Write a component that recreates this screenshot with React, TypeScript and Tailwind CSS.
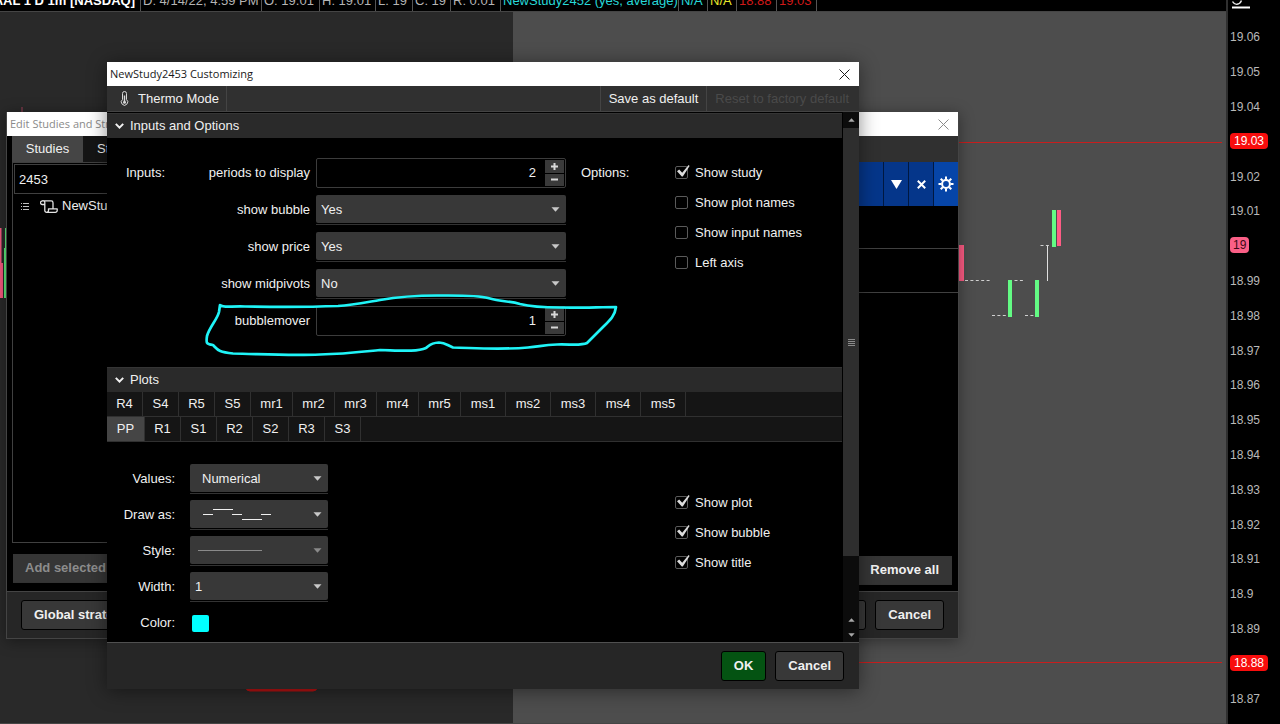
import { useState, type ReactNode } from "react";
import clsx from "clsx";

const quotes = [
    { text: "D: 4/14/22, 4:59 PM", width: "w-[121px]", color: "text-[#b4b4b4]" },
    { text: "O: 19.01", width: "w-[58px]", color: "text-[#b4b4b4]" },
    { text: "H: 19.01", width: "w-[56px]", color: "text-[#b4b4b4]" },
    { text: "L: 19", width: "w-[37px]", color: "text-[#b4b4b4]" },
    { text: "C: 19", width: "w-[38px]", color: "text-[#b4b4b4]" },
    { text: "R: 0.01", width: "w-[50px]", color: "text-[#b4b4b4]" },
    { text: "NewStudy2452 (yes, average)", width: "w-[178px]", color: "text-[#27d8d8]" },
    { text: "N/A", width: "w-[29px]", color: "text-[#27d8d8]" },
    { text: "N/A", width: "w-[29px]", color: "text-[#e8e82a]" },
    { text: "18.88", width: "w-[40px]", color: "text-[#d01818]" },
    { text: "19.03", width: "w-[40px]", color: "text-[#d01818]" },
];

const prices = [
    "19.06", "19.05", "19.04", "19.03", "19.02", "19.01", "19", "18.99", "18.98", "18.97",
    "18.96", "18.95", "18.94", "18.93", "18.92", "18.91", "18.9", "18.89", "18.88", "18.87",
];

const plotRows = [
    ["R4", "S4", "R5", "S5", "mr1", "mr2", "mr3", "mr4", "mr5", "ms1", "ms2", "ms3", "ms4", "ms5"],
    ["PP", "R1", "S1", "R2", "S2", "R3", "S3"],
];

function tabWidth(name: string) {
    if (name.startsWith("ms")) return "w-[45px]";
    if (name.startsWith("mr")) return "w-[42px]";
    return name === "PP" ? "w-[38px]" : "w-9";
}

function CloseIcon({ className }: { className?: string }) {
    return (
        <svg className={clsx("size-[11px]", className)} viewBox="0 0 11 11" fill="none" stroke="currentColor">
            <path d="M0.5 0.5l10 10M10.5 0.5l-10 10" />
        </svg>
    );
}

function Caret({ className }: { className?: string }) {
    return (
        <svg className={className} viewBox="0 0 8 5" fill="currentColor">
            <path d="M0 0.3h8L4 4.8z" />
        </svg>
    );
}

function TitleBar({ title, inactive }: { title: string; inactive?: boolean }) {
    return (
        <div className={clsx("flex h-6 items-center justify-between bg-white pl-[3px] pr-[9px]", inactive ? "text-[#8a8a8a]" : "text-[#1a1a1a]")}>
            <h2 className="font-['Open_Sans',sans-serif] text-[11px] leading-6 whitespace-nowrap">{title}</h2>
            <button aria-label={`Close ${title}`}><CloseIcon /></button>
        </div>
    );
}

function DialogButton({ children, primary }: { children: ReactNode; primary?: boolean }) {
    return (
        <button
            className={clsx(
                "h-[30px] rounded-[3px] border border-black px-3 font-bold text-[#f0f0f0] whitespace-nowrap",
                primary ? "bg-[#045312]" : "bg-[#383838]"
            )}
        >
            {children}
        </button>
    );
}

function SectionHeader({ children }: { children: ReactNode }) {
    return (
        <button className="flex h-[25px] w-full items-center gap-[6px] border-t border-[#353535] bg-[#2a2a2a] pl-2">
            <svg className="h-[6px] w-[9px]" viewBox="0 0 9 6" fill="none" stroke="#f2f2f2" strokeWidth="2">
                <path d="M0.8 0.9L4.5 4.6L8.2 0.9" />
            </svg>
            {children}
        </button>
    );
}

function Dropdown({ id, value, options, picture, dim }: {
    id: string;
    value?: string;
    options?: string[];
    picture?: ReactNode;
    dim?: boolean;
}) {
    return (
        <div className="relative h-[30px] w-full border-b border-[#333] pb-px">
            <select
                id={id}
                defaultValue={value}
                className={clsx("block h-7 w-full appearance-none rounded-[2px] bg-[#383838] pt-[2px] pr-6 text-[#f0f0f0] outline-none", value === "Numerical" ? "pl-3" : "pl-[5px]")}
            >
                {(options ?? []).map((o) => <option key={o}>{o}</option>)}
            </select>
            {picture}
            <Caret className={clsx("pointer-events-none absolute top-3 right-[6px] h-[5px] w-[9px]", dim ? "text-[#8a8a8a]" : "text-[#c8c8c8]")} />
        </div>
    );
}

function Spinner({ id, initial }: { id: string; initial: number }) {
    const [value, setValue] = useState(initial);
    return (
        <div className="flex h-[30px] w-full rounded-[2px] border border-[#3c3c3c] p-px">
            <input
                id={id}
                inputMode="numeric"
                value={value}
                onChange={(e) => setValue(Number(e.target.value) || 0)}
                className="min-w-0 flex-1 bg-transparent pr-[9px] text-right outline-none"
            />
            <div className="flex w-[19px] flex-col gap-px">
                <button aria-label={`Increase ${id}`} onClick={() => setValue(value + 1)} className="flex flex-1 items-center justify-center bg-[#3a3a3a]">
                    <svg className="size-[7px]" viewBox="0 0 7 7" stroke="#d8d8d8" strokeWidth="2"><path d="M3.5 0v7M0 3.5h7" /></svg>
                </button>
                <button aria-label={`Decrease ${id}`} onClick={() => setValue(value - 1)} className="flex flex-1 items-center justify-center bg-[#3a3a3a]">
                    <svg className="size-[7px]" viewBox="0 0 7 7" stroke="#d8d8d8" strokeWidth="2"><path d="M0 3.5h7" /></svg>
                </button>
            </div>
        </div>
    );
}

function CheckOption({ children, checked }: { children: ReactNode; checked?: boolean }) {
    return (
        <label className="flex h-[30px] items-center gap-[7px] whitespace-nowrap">
            <span className="relative mb-px flex">
                <input type="checkbox" defaultChecked={checked} className="peer size-[13px] appearance-none rounded-[2px] border border-[#5a5a5a]" />
                <svg className="pointer-events-none absolute bottom-[2px] left-[2px] hidden h-3 w-[13px] peer-checked:block" viewBox="0 0 13 12" fill="#dcdcdc">
                    <path d="M0 6.2L2.2 4.6L5.2 7.8L11.6 0L12.6 0.9L5.8 11.6H4.8z" />
                </svg>
            </span>
            {children}
        </label>
    );
}

function Chart() {
    return (
        <div className="relative flex flex-1 overflow-hidden border-t border-b border-[#454545]">
            <div className="w-[513px] bg-[#292929]" />
            <div className="flex-1 bg-[#4d4d4d]" />
            <svg className="absolute top-0 left-0 h-[712px] w-[1222px]" viewBox="0 12 1222 712">
                <path d="M22 107v8" stroke="#a04058" />
                <path d="M0 228h1.500v35h1.500v35h-3z" fill="#f5587e" />
                <path d="M5 228h1v20h1v50h-3v-50h1z" fill="#5df07c" />
                <path d="M850 142.500h372M850 662.500h372" stroke="#c81e1e" />
                <g fill="#ff5c85">
                    <path d="M959 245h5v36h-5zM1057 210h4v36h-4z" />
                </g>
                <path d="M1008 280h4v37h-4zM1035 280h4v37h-4zM1052 210h4v37h-4z" fill="#63fb84" />
                <g stroke="#d0d0d0" strokeDasharray="3 2.4">
                    <path d="M965 280.500h26M1014.500 280.500h9M992 315.500h15M1025 315.500h9M1040.500 245.500h9" />
                </g>
                <path d="M1047.500 246v35" stroke="#e0e0e0" />
                <rect x="246" y="674" width="71" height="17" rx="4" fill="#b81212" stroke="#b81212" />
            </svg>
        </div>
    );
}

function PriceAxis() {
    return (
        <div className="flex w-[54px] flex-col border-l-2 border-[#303030] bg-black pb-2 text-[12px] text-[#b9b9b9]">
            <svg className="ml-1 h-5 w-[18px]" viewBox="0 0 18 20" fill="none">
                <path d="M0.500 1.500C2 4 3.500 4.500 5 4.300S8.500 3 9.500 0.500" stroke="#e8e8e8" strokeWidth="1.400" />
                <path d="M0 7.500h18" stroke="#fff" strokeWidth="2" />
            </svg>
            {prices.map((p) => (
                <div key={p} className="flex flex-1 items-center pl-[2px]">
                    <span
                        className={clsx(
                            "rounded-[4px]",
                            p === "19.03" || p === "18.88"
                                ? "mb-[2px] bg-[#f80d0d] px-1 leading-4 text-white"
                                : p === "19" ? "mb-[2px] bg-[#fb5f86] px-[3px] leading-4 text-[#3d0815]" : "leading-4"
                        )}
                    >
                        {p}
                    </span>
                </div>
            ))}
        </div>
    );
}

function EditStudiesWindow() {
    return (
        <section className="absolute top-[112px] left-[6px] w-[953px] overflow-hidden border border-[#444] border-t-0 bg-black shadow-[0_2px_14px_rgba(0,0,0,0.4)]">
            <TitleBar title="Edit Studies and Strategies" inactive />
            <div className="flex justify-between">
                <div className="flex w-[140px] flex-col pl-[5px]">
                    <div className="flex h-[26px]">
                        <button className="w-[71px] shrink-0 bg-[#454545]">Studies</button>
                        <button className="flex-1 bg-[#151515] pl-3.5 text-left">Strategies</button>
                    </div>
                    <div className="flex h-[381px] flex-col border border-[#404040] border-r-0 pt-px pl-px">
                        <input aria-label="Search studies" defaultValue="2453" className="h-[30px] w-full border border-[#404040] pl-1 outline-none" />
                        <div className="flex h-6 items-center pl-[7px] whitespace-nowrap">
                            <svg className="mr-[11px] h-[7px] w-2 shrink-0" viewBox="0 0 8 7" stroke="#c0c0c0">
                                <path d="M0 0.500h1M2 0.500h6M0 3.500h1M2 3.500h6M0 6.500h1M2 6.500h6" />
                            </svg>
                            <svg className="mr-1 h-[13px] w-[18px] shrink-0" viewBox="0 0 18 13" fill="none" stroke="#e4e4e4" strokeWidth="1.300" strokeLinejoin="round">
                                <path d="M3.500 4.500H2.300A1.800 1.800 0 1 1 2.300 0.900H11.200A1.800 1.800 0 0 1 13 2.700V8.800M4.800 2.700V10.500A1.800 1.800 0 0 0 6.600 12.300H15.300A1.800 1.800 0 0 0 17.200 10.500V8.800H8.500V10.500A1.800 1.800 0 0 1 6.600 12.300M2.300 0.900A1.800 1.800 0 0 1 4.800 2.700V4.500H2.500" />
                            </svg>
                            NewStudy2453
                        </div>
                    </div>
                    <button disabled className="mt-[11px] mb-2 ml-px h-[29px] border-b border-[#333] bg-[#353535] pl-3 text-left font-bold whitespace-nowrap text-[#8c8c8c]">Add selected</button>
                </div>
                <div className="flex w-[140px] flex-col">
                    <div className="h-[26px] bg-[#303030]" />
                    <div className="flex h-[44px] gap-px bg-[#001840]">
                        <div className="flex-1 bg-[#05368a]" />
                        <button aria-label="Move down" className="flex w-6 items-center justify-center bg-[#05368a]">
                            <svg className="h-[9px] w-[11px]" viewBox="0 0 11 9" fill="#fff"><path d="M0 0h11L5.500 9z" /></svg>
                        </button>
                        <button aria-label="Remove study" className="flex w-6 items-center justify-center bg-[#05368a]">
                            <svg className="size-[9px]" viewBox="0 0 9 9" stroke="#fff" strokeWidth="2"><path d="M0.800 0.800l7.400 7.400M8.200 0.800L0.800 8.200" /></svg>
                        </button>
                        <button aria-label="Study settings" className="flex w-6 items-center justify-center bg-[#0645a8]">
                            <svg className="size-4" viewBox="0 0 16 16" fill="none" stroke="#fff" strokeWidth="2">
                                <circle cx="8" cy="8" r="3.900" />
                                <path d="M8 0.500v3M8 12.500v3M0.500 8h3M12.500 8h3M2.700 2.700l2.100 2.100M11.200 11.200l2.100 2.100M13.300 2.700l-2.100 2.100M4.800 11.200l-2.100 2.100" />
                            </svg>
                        </button>
                    </div>
                    <div className="h-[43px] border-b border-[#404040]" />
                    <div className="h-11 border-b border-[#404040]" />
                    <button className="mt-auto mr-1.5 mb-1.5 ml-9 h-[29px] border-b border-[#333] bg-[#353535] pr-[13px] text-right font-bold text-[#f0f0f0]">Remove all</button>
                </div>
            </div>
            <div className="flex h-[47px] items-center justify-between border-t border-[#444] bg-[#262626] px-3.5">
                <DialogButton>Global strategy behavior</DialogButton>
                <div className="flex gap-[9px]">
                    <DialogButton>Apply</DialogButton>
                    <DialogButton>Cancel</DialogButton>
                </div>
            </div>
        </section>
    );
}

function InputsAndOptions() {
    return (
        <div className="flex pt-5 pb-[31px] pl-[19px]">
            <div className="w-[60px] leading-[30px]">Inputs:</div>
            <div className="grid w-[380px] grid-cols-[1fr_250px] items-center gap-x-1.5 gap-y-[7px] text-right">
                <label htmlFor="periods">periods to display</label>
                <Spinner id="periods" initial={2} />
                <label htmlFor="show-bubble">show bubble</label>
                <Dropdown id="show-bubble" value="Yes" options={["Yes", "No"]} />
                <label htmlFor="show-price">show price</label>
                <Dropdown id="show-price" value="Yes" options={["Yes", "No"]} />
                <label htmlFor="show-midpivots">show midpivots</label>
                <Dropdown id="show-midpivots" value="No" options={["Yes", "No"]} />
                <label htmlFor="bubblemover">bubblemover</label>
                <Spinner id="bubblemover" initial={1} />
            </div>
            <div className="ml-[15px] w-[94px] leading-[30px]">Options:</div>
            <div>
                <CheckOption checked>Show study</CheckOption>
                <CheckOption>Show plot names</CheckOption>
                <CheckOption>Show input names</CheckOption>
                <CheckOption>Left axis</CheckOption>
            </div>
        </div>
    );
}

function Plots() {
    return (
        <>
            {plotRows.map((row) => (
                <div key={row[0]} role="tablist" className="flex h-[25px] border-b border-[#303030] bg-[#151515]">
                    {row.map((name) => (
                        <button key={name} role="tab" aria-selected={name === "PP"} className={clsx("border-r border-[#303030]", tabWidth(name), name === "PP" && "bg-[#454545]")}>
                            {name}
                        </button>
                    ))}
                </div>
            ))}
            <div className="flex pt-[22px] pb-1">
                <div className="grid w-[221px] grid-cols-[68px_138px] items-center gap-x-[15px] gap-y-1.5 text-right">
                    <label htmlFor="values">Values:</label>
                    <Dropdown id="values" value="Numerical" options={["Numerical"]} />
                    <label htmlFor="draw-as">Draw as:</label>
                    <Dropdown
                        id="draw-as"
                        picture={
                            <svg className="pointer-events-none absolute top-2 left-[13px] h-3 w-[69px]" viewBox="0 0 69 12" stroke="#f0f0f0" fill="none">
                                <path d="M0 6.500h10M10 1.500h20M29 6.500h10M39 11.500h20M58 6.500h10" />
                            </svg>
                        }
                    />
                    <label htmlFor="style">Style:</label>
                    <Dropdown
                        id="style"
                        dim
                        picture={
                            <svg className="pointer-events-none absolute top-[14px] left-2 h-px w-16" viewBox="0 0 64 1" stroke="#8a8a8a">
                                <path d="M0 0.500h64" />
                            </svg>
                        }
                    />
                    <label htmlFor="width">Width:</label>
                    <Dropdown id="width" value="1" options={["1", "2", "3", "4", "5"]} />
                    <label htmlFor="color">Color:</label>
                    <div className="flex h-[30px] items-center pl-[2px]">
                        <input
                            id="color"
                            type="color"
                            defaultValue="#00ffff"
                            className="size-[17px] appearance-none overflow-hidden rounded-[2px] [&::-webkit-color-swatch]:border-0 [&::-webkit-color-swatch-wrapper]:p-0"
                        />
                    </div>
                </div>
                <div className="ml-[347px] pt-6">
                    <CheckOption checked>Show plot</CheckOption>
                    <CheckOption checked>Show bubble</CheckOption>
                    <CheckOption checked>Show title</CheckOption>
                </div>
            </div>
        </>
    );
}

function ScrollBar() {
    return (
        <div className="ml-px flex w-4 flex-col items-center bg-[#0c0c0c] text-[#a8a8a8]">
            <div className="flex h-4 items-center"><Caret className="h-1 w-[7px] rotate-180" /></div>
            <div className="flex w-full flex-1 items-center justify-center bg-[#2e2e2e]">
                <svg className="h-[7px] w-[7px]" viewBox="0 0 7 7" stroke="#8a8a8a"><path d="M0 0.500h7M0 2.500h7M0 4.500h7M0 6.500h7" /></svg>
            </div>
            <div className="flex h-[86px] flex-col justify-end gap-[11px] pb-[5px]">
                <Caret className="h-1 w-[7px] rotate-180" />
                <Caret className="h-1 w-[7px]" />
            </div>
        </div>
    );
}

function CustomizingDialog() {
    return (
        <section className="absolute top-[62px] left-[107px] w-[752px] bg-black shadow-[0_2px_18px_rgba(0,0,0,0.45)]">
            <TitleBar title="NewStudy2453 Customizing" />
            <div className="flex h-[26px] border-b border-[#444] bg-[#303030]">
                <button className="flex items-center gap-2 border-r border-[#444] pr-[7px] pl-3">
                    <svg className="h-[15px] w-[11px]" viewBox="0 0 11 15" fill="none" stroke="#d8d8d8">
                        <path d="M3.500 8.500V2.500a2 2 0 0 1 4 0V8.500a3.200 3.200 0 1 1-4 0z" />
                        <path d="M5.500 4.500v6" strokeWidth="1.400" />
                        <circle cx="5.500" cy="11.200" r="1.500" fill="#d8d8d8" stroke="none" />
                    </svg>
                    Thermo Mode
                </button>
                <button className="ml-auto border-x border-[#444] px-2">Save as default</button>
                <button disabled className="pr-[10px] pl-2 text-[#4a4a4a]">Reset to factory default</button>
            </div>
            <div className="flex border-b border-[#505050]">
                <div className="min-w-0 flex-1 pt-px">
                    <SectionHeader>Inputs and Options</SectionHeader>
                    <InputsAndOptions />
                    <SectionHeader>Plots</SectionHeader>
                    <Plots />
                </div>
                <ScrollBar />
            </div>
            <div className="flex justify-end gap-[9px] bg-[#262626] px-[15px] py-2">
                <DialogButton primary>OK</DialogButton>
                <DialogButton>Cancel</DialogButton>
            </div>
            {/* hand-drawn marker round the bubblemover row */}
            <svg className="pointer-events-none absolute top-[228px] left-[93px] h-[72px] w-[424px]" viewBox="200 290 424 72" fill="none" stroke="#1ff4f7" strokeWidth="2.700" strokeLinejoin="round">
                <path d="M220 305C223 308 230 306 245 306.500C275 307 310 307 338 306C352 305 362 303 380 300C397 297 417 295.500 437 295.500C460 295.500 478 295 488 298C502 302 510 301 520 304C532 307 542 307.500 560 307.500C580 308 600 307 616 307C615 316 609 321 603 327L587 343C581 346 570 344 557 344.500C543 345 540 346.500 528 347.500C500 350 475 348 453 347.500C447 345 445 342.500 439 342.500C430 343 429 346 426 348C417 352 400 350.500 380 350C360 352 345 354 320 354.500C290 356 260 354 233 353.500C218 352 218 350 213 345C206 344 206 343 207 336C210 326 217 320 219 312z" />
            </svg>
        </section>
    );
}

export default function App() {
    return (
        <main className="relative flex min-h-screen overflow-hidden bg-black font-['Liberation_Sans',Arial,sans-serif] text-[13px] text-[#f0f0f0]">
            <div className="flex min-w-0 flex-1 flex-col">
                <div className="flex h-[11px] items-stretch overflow-hidden leading-none whitespace-nowrap">
                    <div className="flex w-[141px] items-end justify-end border-r border-[#555] pr-[5px] pb-1 font-bold text-white">AAL 1 D 1m [NASDAQ]</div>
                    {quotes.map((q, i) => (
                        <div key={i} className={clsx("flex items-end border-r border-[#555] pb-1 pl-[2px]", q.width, q.color)}>{q.text}</div>
                    ))}
                </div>
                <Chart />
            </div>
            <PriceAxis />
            <EditStudiesWindow />
            <CustomizingDialog />
        </main>
    );
}
